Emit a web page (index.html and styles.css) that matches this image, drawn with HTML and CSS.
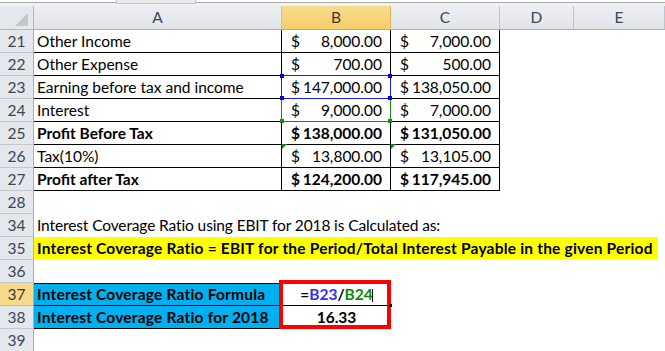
FILE: index.html
```html
<!DOCTYPE html>
<html>
<head>
<meta charset="utf-8">
<link rel="stylesheet" href="styles.css">
</head>
<body>
<div class="strip"><div class="strip-tab"></div></div>
<div class="sheet">
  <div class="corner"><svg width="34" height="24" viewBox="0 0 34 24"><polygon points="15,20 28,20 28,7" fill="#c3c7cd"/></svg></div>
  <div class="ch">A</div><div class="ch active">B</div><div class="ch">C</div><div class="ch">D</div><div class="ch">E</div>

  <div class="rh">21</div><div class="c bb br">Other Income</div><div class="c bb br num"><span>$</span><span>8,000.00</span></div><div class="c bb br num"><span>$</span><span>7,000.00</span></div><div class="c"></div><div class="c"></div>
  <div class="rh">22</div><div class="c bb br">Other Expense</div><div class="c bb br num"><span>$</span><span>700.00</span></div><div class="c bb br num"><span>$</span><span>500.00</span></div><div class="c"></div><div class="c"></div>
  <div class="rh">23</div><div class="c bb br">Earning before tax and income</div><div class="c bb br num"><span>$</span><span>147,000.00</span></div><div class="c bb br num"><span>$</span><span>138,050.00</span></div><div class="c"></div><div class="c"></div>
  <div class="rh">24</div><div class="c bb br">Interest</div><div class="c bb br num"><span>$</span><span>9,000.00</span></div><div class="c bb br num"><span>$</span><span>7,000.00</span></div><div class="c"></div><div class="c"></div>
  <div class="rh">25</div><div class="c bb br b">Profit Before Tax</div><div class="c bb br num b"><span>$</span><span>138,000.00</span></div><div class="c bb br num b"><span>$</span><span>131,050.00</span></div><div class="c"></div><div class="c"></div>
  <div class="rh">26</div><div class="c bb br">Tax(10%)</div><div class="c bb br num"><span>$</span><span>13,800.00</span></div><div class="c bb br num"><span>$</span><span>13,105.00</span></div><div class="c"></div><div class="c"></div>
  <div class="rh">27</div><div class="c bb br b">Profit after Tax</div><div class="c bb br num b"><span>$</span><span>124,200.00</span></div><div class="c bb br num b"><span>$</span><span>117,945.00</span></div><div class="c"></div><div class="c"></div>
  <div class="rh">28</div><div class="c wide"></div>
  <div class="rh">34</div><div class="c wide narrow">Interest Coverage Ratio using EBIT for 2018 is Calculated as:</div>
  <div class="rh">35</div><div class="c wide"><div class="yellow b wide-b">Interest Coverage Ratio = EBIT for the Period/Total Interest Payable in the given Period</div></div>
  <div class="rh">36</div><div class="c wide"></div>
  <div class="rh active">37</div><div class="c cyan bt bb br b wide-b">Interest Coverage Ratio Formula</div><div class="c bt bb center b"><span class="eq">=</span><span class="ref1">B23</span>/<span class="ref2">B24</span></div><div class="c"></div><div class="c"></div><div class="c"></div>
  <div class="rh">38</div><div class="c cyan bb br b wide-b">Interest Coverage Ratio for 2018</div><div class="c bb center b">16.33</div><div class="c"></div><div class="c"></div><div class="c"></div>
  <div class="rh">39</div><div class="c wide"></div>

  <div class="refbox blue"><i class="h tl"></i><i class="h tr"></i><i class="h bl"></i><i class="h br2"></i></div>
  <div class="refbox green"><i class="h bl"></i><i class="h br2"></i></div>
  <div class="tri tri-b"></div>
  <div class="tri tri-c"></div>
  <div class="redbox"></div>
  <div class="caret"></div>
  <div class="fill"></div>
</div>
</body>
</html>
```

FILE: styles.css
```css
html, body {
  margin: 0;
  padding: 0;
  background: #fff;
  overflow: hidden;
}
body {
  width: 665px;
  height: 351px;
  font-family: Lato, "Liberation Sans", sans-serif;
  font-size: 15.5px;
  color: #000;
}
.strip {
  height: 6px;
  box-sizing: border-box;
  border-top: 2px solid #fff;
  background: linear-gradient(#a9a9a9 0 1px, #f1f2f4 1px);
  position: relative;
}
.strip-tab {
  position: absolute;
  left: 116px;
  top: -2px;
  width: 78px;
  height: 3px;
  background: #e9eaec;
  border: 1px solid #c6c6c6;
  border-top: none;
}
.sheet {
  position: relative;
  display: grid;
  grid-template-columns: 34px 248px 109px 109px 74px 1fr;
  grid-template-rows: 24px repeat(14, 23px);
}
.corner {
  background: #e4e7ec;
  border-right: 1px solid #b4b9c1;
  border-bottom: 1px solid #b4b9c1;
  box-sizing: border-box;
  overflow: hidden;
}
.corner svg { display: block; }
.ch {
  background: linear-gradient(#eceef2, #e1e5ea);
  border-right: 1px solid #bfc4cb;
  border-bottom: 1px solid #a9aeb6;
  box-sizing: border-box;
  text-align: center;
  line-height: 23px;
  color: #3c4656;
}
.ch.active {
  background: linear-gradient(#f8dd8d, #f5cd6b);
  border-right-color: #e3b456;
  border-bottom-color: #d9a63f;
  color: #3c3a2c;
}
.rh {
  background: #e4e7ec;
  border-right: 1px solid #a9aeb6;
  border-bottom: 1px solid #c3c7ce;
  box-sizing: border-box;
  text-align: center;
  line-height: 22px;
  color: #3c4656;
}
.rh.active {
  background: #f9d98a;
  border-bottom-color: #e2b55a;
  color: #3c3a2c;
}
.c {
  box-sizing: border-box;
  line-height: 22px;
  padding: 0 3px;
  white-space: nowrap;
  overflow: visible;
}
.bb { border-bottom: 1px solid #000; }
.br { border-right: 1px solid #000; }
.bt { border-top: 1px solid #000; line-height: 21px; }
.b { font-weight: 700; }
.wide-b { letter-spacing: 0.2px; }
.narrow { letter-spacing: -0.12px; }
.num {
  display: flex;
  justify-content: space-between;
  padding: 0 8px 0 9px;
}
.center { text-align: center; }
.wide { grid-column: 2 / 7; }
.yellow {
  width: 624px;
  margin-left: -3px;
  padding-left: 3px;
  box-sizing: border-box;
  background: #ffff00;
  height: 22px;
  overflow: hidden;
}
.cyan {
  background: #00b0f0;
}
.ref1 { color: #2f2fff; }
.ref2 { color: #0a8a0a; }
.refbox {
  position: absolute;
  left: 281px;
  width: 110px;
  box-sizing: border-box;
}
.refbox.blue {
  top: 69px;
  height: 24px;
  border: 1px solid #1c1cff;
  z-index: 3;
}
.refbox.green {
  top: 92px;
  height: 24px;
  border: 1px solid #138a13;
  z-index: 2;
}
.h {
  position: absolute;
  width: 4px;
  height: 4px;
}
.blue .h { background: #0000ee; }
.green .h { background: #138a13; }
.h.tl { left: -2px; top: -2px; }
.h.tr { right: -2px; top: -2px; }
.h.bl { left: -2px; bottom: -2px; }
.h.br2 { right: -2px; bottom: -2px; }
.tri {
  position: absolute;
  top: 138px;
  width: 0;
  height: 0;
  border-top: 5px solid #138a13;
  border-right: 5px solid transparent;
}
.tri-b { left: 282px; }
.tri-c { left: 391px; }
.redbox {
  position: absolute;
  left: 279px;
  top: 274px;
  width: 112px;
  height: 49px;
  box-sizing: border-box;
  border: 4px solid #ff0000;
  z-index: 4;
}
.caret {
  position: absolute;
  left: 372px;
  top: 283px;
  width: 1px;
  height: 13px;
  background: #000;
  z-index: 5;
}
.fill {
  position: absolute;
  left: 389px;
  top: 298px;
  width: 3px;
  height: 3px;
  background: #000;
  z-index: 5;
}
```
